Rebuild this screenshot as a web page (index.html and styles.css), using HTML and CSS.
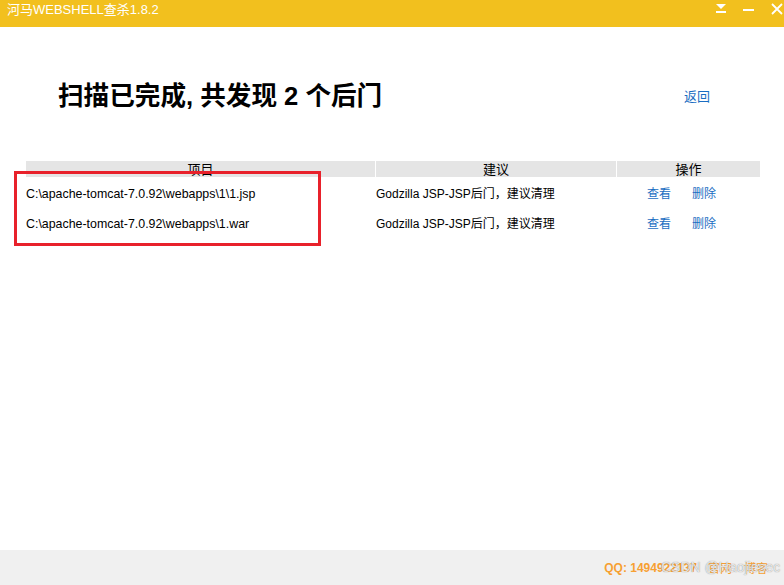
FILE: index.html
```html
<!DOCTYPE html>
<html lang="zh-CN">
  <head>
    <meta charset="utf-8" />
    <title>河马WEBSHELL查杀1.8.2</title>
    <link rel="stylesheet" href="styles.css">
  </head>
  <body>
    <div class="app">
      <div class="titlebar">
        <span class="app-name">河马WEBSHELL查杀1.8.2</span>
        <div class="win-btns">
          <span class="btn-menu">
            <svg width="12" height="10" viewBox="0 0 12 10">
              <path d="M1 0H11L6 5Z" fill="#fff" />
              <rect x="1" y="7" width="10" height="2" fill="#fff" />
            </svg>
          </span>
          <span class="btn-min">
            <svg width="12" height="10" viewBox="0 0 12 10">
              <rect x="0" y="5" width="11" height="2" fill="#fff" />
            </svg>
          </span>
          <span class="btn-close">
            <svg width="12" height="12" viewBox="0 0 12 12">
              <path d="M1 1L11 11M11 1L1 11" stroke="#fff" stroke-width="1.8" />
            </svg>
          </span>
        </div>
      </div>

      <div class="content">
        <div class="summary">
          <h1>扫描已完成, 共发现 2 个后门</h1>
          <a class="back" href="#">返回</a>
        </div>

        <div class="result-table">
          <div class="thead">
            <div class="col-item">项目</div>
            <div class="col-advice">建议</div>
            <div class="col-ops">操作</div>
          </div>
          <div class="row">
            <div class="col-item">C:\apache-tomcat-7.0.92\webapps\1\1.jsp</div>
            <div class="col-advice">Godzilla JSP-JSP后门，建议清理</div>
            <div class="col-ops"><a href="#">查看</a><a href="#">删除</a></div>
          </div>
          <div class="row">
            <div class="col-item">C:\apache-tomcat-7.0.92\webapps\1.war</div>
            <div class="col-advice">Godzilla JSP-JSP后门，建议清理</div>
            <div class="col-ops"><a href="#">查看</a><a href="#">删除</a></div>
          </div>
          <div class="mark"></div>
        </div>
      </div>

      <div class="footer">
        <span class="qq">QQ: 1494922137</span>
        <a href="#">官网</a>
        <a href="#">博客</a>
        <span class="watermark">CSDN @Haojiesec</span>
      </div>
    </div>
  </body>
</html>
```

FILE: styles.css
```css
body {
  margin: 0;
  font-family: "Liberation Sans", Arial, "Noto Sans CJK SC", sans-serif;
  font-size: 12px;
  color: #000;
  background: #fff;
}
a {
  text-decoration: none;
  color: #1a6dc2;
}
.app {
  width: 784px;
  height: 585px;
  display: flex;
  flex-direction: column;
  overflow: hidden;
}
.titlebar {
  height: 27px;
  flex: none;
  background: #f2c01e;
  display: flex;
  align-items: center;
  justify-content: space-between;
  padding: 0 0 0 7px;
  box-sizing: border-box;
}
.app-name {
  color: #fff;
  font-size: 13px;
  margin-top: -10px;
}
.win-btns {
  display: flex;
  align-items: center;
  height: 100%;
}
.win-btns span {
  display: flex;
  margin-top: -9px;
}
.btn-menu {
  margin-right: 16px;
}
.btn-min {
  margin-right: 16px;
}
.btn-close {
  margin-right: 1px;
}
.content {
  flex: 1;
}
.summary {
  display: flex;
  align-items: center;
  justify-content: space-between;
  padding: 54px 74px 0 58px;
  height: 30px;
}
.summary h1 {
  margin: 0;
  font-size: 25.6px;
  font-weight: bold;
  line-height: 30px;
}
.back {
  font-size: 13px;
  margin-top: -2px;
}
.result-table {
  position: relative;
  margin: 50px 0 0 26px;
  width: 734px;
}
.thead,
.row {
  display: flex;
}
.thead {
  height: 16px;
  line-height: 18px;
  font-size: 13px;
}
.thead div {
  background: #e5e5e5;
  text-align: center;
  overflow: hidden;
}
.thead .col-advice,
.thead .col-ops {
  margin-left: 1px;
}
.col-item {
  width: 349px;
}
.col-advice {
  width: 240px;
}
.col-ops {
  width: 143px;
}
.row {
  height: 30px;
  line-height: 30px;
}
.row .col-item {
  font-size: 12.4px;
}
.thead + .row {
  margin-top: 2px;
}
.row .col-advice {
  margin-left: 1px;
}
.row .col-ops {
  margin-left: 1px;
  padding-left: 30px;
  box-sizing: border-box;
}
.row .col-ops a {
  font-size: 12px;
  margin-right: 21px;
}
.mark {
  position: absolute;
  left: -12px;
  top: 10px;
  width: 301px;
  height: 69px;
  border: 3px solid #e8212b;
}
.footer {
  height: 35px;
  flex: none;
  background: #f0f0f0;
  display: flex;
  align-items: center;
  justify-content: flex-end;
  padding-right: 16px;
  position: relative;
  font-size: 12px;
}
.footer .qq {
  color: #f7a032;
  font-weight: bold;
  margin-right: -1px;
}
.footer a {
  color: #f7a032;
  margin-left: 12px;
}
.watermark {
  position: absolute;
  left: 661px;
  top: 9px;
  white-space: nowrap;
  font-size: 14px;
  color: rgba(255, 255, 255, 0.8);
  text-shadow: 0 0 1px rgba(90, 90, 90, 0.8);
}
```
